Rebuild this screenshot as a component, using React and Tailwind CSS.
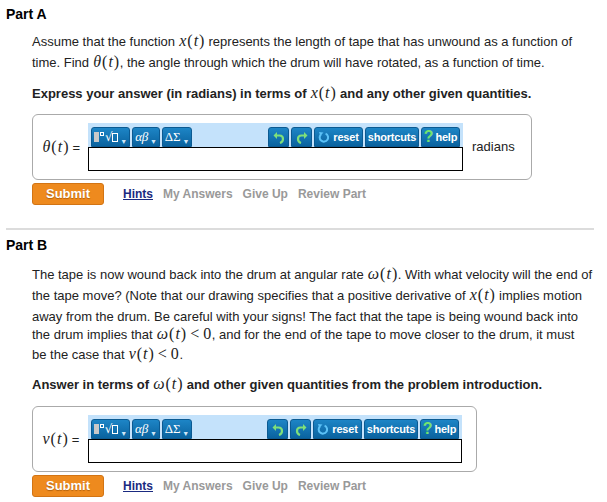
import React from "react";

const sans = { fontFamily: '"Liberation Sans", Arial, sans-serif' };

// inline math, serif italic like the MathJax output
const M = ({ children }) => (
  <span className="px-[0.5px] text-[16px] italic" style={{ fontFamily: '"Liberation Serif", "DejaVu Serif", serif' }}>
    {children}
  </span>
);
const P = ({ children }) => (
  <span className="px-[0.5px] text-[16px] not-italic" style={{ fontFamily: '"Liberation Serif", serif' }}>
    {children}
  </span>
);

const Btn = ({ children, className = "" }) => (
  <div
    className={`flex h-[20px] items-center justify-center rounded-t-[3px] border border-[#0b5a92] bg-gradient-to-b from-[#1d85c6] to-[#0a639f] text-[11px] font-bold tracking-[-0.2px] text-white ${className}`}
    style={sans}
  >
    {children}
  </div>
);

const Caret = () => <span className="ml-[2px] mt-[8px] text-[7px] leading-none text-[#cfe6f7]">▼</span>;

const Undo = ({ flip }) => (
  <svg width="12" height="13" viewBox="0 0 12 13" style={flip ? { transform: "scaleX(-1)" } : undefined}>
    <path d="M4 1 L0.5 4.5 L4 8 Z" fill="#7fe07a" />
    <path d="M3 4.5 H6.5 Q10 4.5 10 8 Q10 11 7 12" stroke="#7fe07a" strokeWidth="2.2" fill="none" />
  </svg>
);

const Toolbar = () => (
  <div className="flex h-[24px] items-end justify-between bg-[#c4e2fb] px-[3px]">
    <div className="flex gap-[2px]">
      <Btn className="w-[39px]">
        <span className="h-[10px] w-[5px] bg-[#c9c9c9]" />
        <span className="mb-[6px] ml-[1px] h-[4px] w-[4px] border border-white" />
        <span className="ml-[1px] text-[12px] font-normal" style={{ fontFamily: '"DejaVu Serif", serif' }}>√</span>
        <span className="h-[9px] w-[6px] border border-white" />
        <Caret />
      </Btn>
      <Btn className="w-[28px]">
        <span className="text-[13px] font-normal italic" style={{ fontFamily: '"Liberation Serif", serif' }}>αβ</span>
        <Caret />
      </Btn>
      <Btn className="w-[30px]">
        <span className="text-[13px] font-normal" style={{ fontFamily: '"Liberation Serif", serif' }}>ΔΣ</span>
        <Caret />
      </Btn>
    </div>
    <div className="flex gap-[2px]">
      <Btn className="w-[21px]">
        <Undo />
      </Btn>
      <Btn className="w-[21px]">
        <Undo flip />
      </Btn>
      <Btn className="w-[49px] gap-[4px]">
        <svg width="11" height="12" viewBox="0 0 11 12">
          <path d="M3.2 3.2 A4.2 4.2 0 1 0 7.6 2.6" stroke="#5cc2f7" strokeWidth="2" fill="none" />
          <path d="M1 1 L5.5 1.5 L2.2 5 Z" fill="#5cc2f7" />
        </svg>
        reset
      </Btn>
      <Btn className="w-[54px]">shortcuts</Btn>
      <Btn className="w-[39px] gap-[2px]">
        <span className="text-[16px] font-bold leading-none text-[#74e36e]">?</span>
        help
      </Btn>
    </div>
  </div>
);

const AnswerBox = ({ label, units }) => (
  <div className="flex items-center rounded-[6px] border border-[#aaa] py-[8px] pl-[9px] pr-[14px]" style={{ width: units ? 500 : 445 }}>
    <div className="w-[46px] text-[13px] text-[#222]">
      <M>{label}</M>
      <P>(</P>
      <M>t</M>
      <P>)</P> =
    </div>
    <div className="w-[375px]">
      <Toolbar />
      <div className="h-[24px] border-[1.5px] border-black bg-white" />
    </div>
    {units && <div className="ml-[9px] text-[13px] text-[#222]">{units}</div>}
  </div>
);

const Actions = () => (
  <div className="mt-[3px] flex items-center">
    <div className="flex h-[22px] w-[72px] items-center justify-center rounded-[3px] border border-[#d27414] bg-[#ee8a1e] text-[13px] font-bold text-white [text-shadow:0_1px_1px_#b0600c]">
      Submit
    </div>
    <div className="ml-[19px] flex gap-[10px] text-[12px] font-bold text-[#999]">
      <span className="text-[#1a2a80] underline">Hints</span>
      <span>My Answers</span>
      <span>Give Up</span>
      <span>Review Part</span>
    </div>
  </div>
);

export default function App() {
  return (
    <div className="h-[502px] w-[607px] overflow-hidden bg-white text-[13px] text-[#222]" style={sans}>
      <div className="px-[6px] pt-[4px]">
        <div className="text-[14px] font-bold leading-[20px] text-black">Part A</div>
      </div>
      <div className="pl-[32px]">
        <div className="mt-[6px] leading-[21px]">
          <div className="h-[21px]">
            Assume that the function <M>x</M>
            <P>(</P>
            <M>t</M>
            <P>)</P> represents the length of tape that has unwound as a function of
          </div>
          <div className="h-[21px]">
            time. Find <M>θ</M>
            <P>(</P>
            <M>t</M>
            <P>)</P>, the angle through which the drum will have rotated, as a function of time.
          </div>
        </div>
        <div className="mt-[10px] h-[21px] font-bold leading-[21px] text-[#222]">
          Express your answer (in radians) in terms of <span className="font-normal"><M>x</M><P>(</P><M>t</M><P>)</P></span> and any other given quantities.
        </div>
        <div className="mt-[11px]">
          <AnswerBox label="θ" units="radians" />
        </div>
        <Actions />
      </div>

      <div className="mx-[6px] mt-[23px] h-[2px] w-[588px] bg-[#dcdcdc]" />

      <div className="px-[6px] pt-[5px]">
        <div className="text-[14px] font-bold leading-[20px] text-black">Part B</div>
      </div>
      <div className="pl-[32px]">
        <div className="mt-[8px] leading-[21px]">
          <div className="h-[21px]">
            The tape is now wound back into the drum at angular rate <M>ω</M>
            <P>(</P>
            <M>t</M>
            <P>)</P>. With what velocity will the end of
          </div>
          <div className="h-[22px]">
            the tape move? (Note that our drawing specifies that a positive derivative of <M>x</M>
            <P>(</P>
            <M>t</M>
            <P>)</P> implies motion
          </div>
          <div className="h-[17px] leading-[22px]">
            away from the drum. Be careful with your signs! The fact that the tape is being wound back into
          </div>
          <div className="h-[20px]">
            the drum implies that <M>ω</M>
            <P>(</P>
            <M>t</M>
            <P>) &lt; 0</P>, and for the end of the tape to move closer to the drum, it must
          </div>
          <div className="h-[20px]">
            be the case that <M>v</M>
            <P>(</P>
            <M>t</M>
            <P>) &lt; 0</P>.
          </div>
        </div>
        <div className="mt-[10px] h-[21px] font-bold leading-[21px]">
          Answer in terms of <span className="font-normal"><M>ω</M><P>(</P><M>t</M><P>)</P></span> and other given quantities from the problem introduction.
        </div>
        <div className="mt-[12px]">
          <AnswerBox label="v" />
        </div>
        <Actions />
      </div>
    </div>
  );
}
